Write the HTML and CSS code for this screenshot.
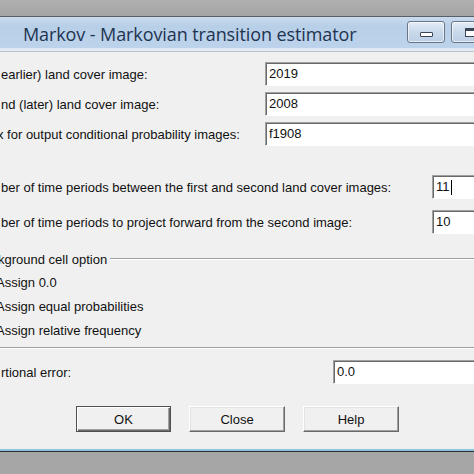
FILE: index.html
```html
<!DOCTYPE html>
<html>
<head>
<meta charset="utf-8">
<link rel="stylesheet" href="styles.css">
</head>
<body>
<div class="desk-top"></div>
<div class="window">
  <div class="titlebar">
    <span class="title">Markov - Markovian transition estimator</span>
    <div class="caption-btns">
      <div class="cbtn"><span class="glyph-min"></span></div>
      <div class="cbtn"><span class="glyph-max"></span></div>
    </div>
  </div>
  <div class="edge"></div>
  <div class="client">
    <div class="row r1"><span class="label w1">earlier) land cover image:</span><div class="field">2019</div></div>
    <div class="row r2"><span class="label w1">nd (later) land cover image:</span><div class="field">2008</div></div>
    <div class="row r3"><span class="label w1 cut3">x for output conditional probability images:</span><div class="field">f1908</div></div>
    <div class="row r4"><span class="label w2">ber of time periods between the first and second land cover images:</span><div class="field">11<span class="caret"></span></div></div>
    <div class="row r5"><span class="label w2">ber of time periods to project forward from the second image:</span><div class="field">10</div></div>
    <div class="group-head"><span class="legend">kground cell option</span><span class="etch"></span></div>
    <div class="radio first">Assign 0.0</div>
    <div class="radio">Assign equal probabilities</div>
    <div class="radio">Assign relative frequency</div>
    <div class="group-foot etch"></div>
    <div class="row r6"><span class="label w3">rtional error:</span><div class="field">0.0</div></div>
    <div class="buttons">
      <div class="btn default">OK</div>
      <div class="btn">Close</div>
      <div class="btn">Help</div>
    </div>
  </div>
  <div class="frame-bottom"></div>
</div>
<div class="desk-bottom"></div>
</body>
</html>
```
FILE: styles.css
```css
html, body {
  margin: 0;
  padding: 0;
  width: 474px;
  height: 474px;
  overflow: hidden;
  background: #a8a8a8;
  font-family: "Liberation Sans", Arial, sans-serif;
}
.desk-top {
  height: 16px;
  background: linear-gradient(#b0b0b0, #a4a4a4);
}
.window {
  width: 540px;
  border-top: 1px solid #5a5f66;
}
.titlebar {
  height: 31px;
  display: flex;
  align-items: flex-start;
  background: linear-gradient(#c9dbee 0%, #b8cfe8 30%, #bdd3ec 100%);
}
.title {
  flex: 0 0 384px;
  padding-left: 23px;
  font-family: "Open Sans", "Noto Sans", sans-serif;
  font-size: 18px;
  letter-spacing: -0.1px;
  line-height: 34px;
  color: #1e3450;
  white-space: nowrap;
}
.caption-btns {
  display: flex;
  gap: 6px;
  margin-top: 4px;
}
.cbtn {
  width: 38px;
  height: 22px;
  box-sizing: border-box;
  border: 1px solid #6a7686;
  border-radius: 3px;
  background: linear-gradient(#e4edf7, #c9d9eb 50%, #bccfe5);
  box-shadow: inset 0 0 0 1px rgba(255,255,255,0.6);
  display: flex;
  justify-content: center;
  align-items: center;
}
.glyph-min {
  width: 13px;
  height: 5px;
  box-sizing: border-box;
  margin-top: 5px;
  border: 1px solid #3a4656;
  border-radius: 1px;
  background: #fff;
}
.glyph-max {
  width: 11px;
  height: 9px;
  box-sizing: border-box;
  border: 1px solid #3a4656;
  border-top-width: 3px;
  background: #fff;
}
.edge {
  height: 3px;
  background: linear-gradient(#dbe6f2, #e9eef4);
  border-bottom: 1px solid #b7c2cf;
}
.client {
  background: #f0f0f0;
  padding-top: 10px;
  padding-bottom: 17px;
  font-size: 13px;
  color: #111;
}
.row {
  display: flex;
  align-items: center;
  height: 24px;
  margin-bottom: 6px;
}
.r4 { margin-top: 29px; margin-bottom: 11px; }
.r5 { margin-bottom: 0; }
.r6 { margin-top: 11px; margin-bottom: 0; }
.label {
  white-space: nowrap;
  padding-left: 1px;
  box-sizing: border-box;
}
.w1 { flex: 0 0 265px; }
.w2 { flex: 0 0 432px; }
.w3 { flex: 0 0 333px; }
.cut3 { text-indent: -4px; }
.field {
  flex: 1;
  height: 24px;
  box-sizing: border-box;
  background: #fff;
  border: 1px solid;
  border-color: #a0a0a0 #ffffff #ffffff #a0a0a0;
  box-shadow: inset 1px 1px 0 #696969;
  padding-left: 3px;
  line-height: 22px;
  display: flex;
  align-items: center;
}
.caret {
  display: inline-block;
  width: 1px;
  height: 15px;
  background: #000;
  margin-left: 1px;
}
.group-head {
  display: flex;
  align-items: center;
  height: 16px;
  margin-top: 17px;
}
.legend {
  text-indent: -2px;
  white-space: nowrap;
  padding-right: 3px;
}
.etch {
  flex: 1;
  height: 1px;
  background: #a0a0a0;
  border-bottom: 1px solid #fff;
}
.radio {
  height: 24px;
  line-height: 24px;
  text-indent: -4px;
  white-space: nowrap;
}
.radio.first { margin-top: 4px; }
.group-foot {
  margin-top: 4px;
}
.buttons {
  display: flex;
  gap: 18px;
  padding-left: 76px;
  margin-top: 22px;
}
.btn {
  width: 95px;
  height: 26px;
  box-sizing: border-box;
  background: #f0f0f0;
  border: 1px solid;
  border-color: #ffffff #696969 #696969 #ffffff;
  box-shadow: inset -1px -1px 0 #a0a0a0, inset 1px 1px 0 #e3e3e3;
  display: flex;
  justify-content: center;
  align-items: center;
  font-size: 13px;
  color: #111;
}
.btn + .btn { width: 96px; }
.btn.default {
  border: 1px solid #505050;
  box-shadow: inset 1px 1px 0 #ffffff, inset -1px -1px 0 #696969, inset -2px -2px 0 #a0a0a0;
}
.frame-bottom {
  height: 2px;
  background: #8fc4e0;
  border-bottom: 1px solid #2a2e33;
}
.desk-bottom {
  height: 40px;
  background: #a6a6a6;
}
```
